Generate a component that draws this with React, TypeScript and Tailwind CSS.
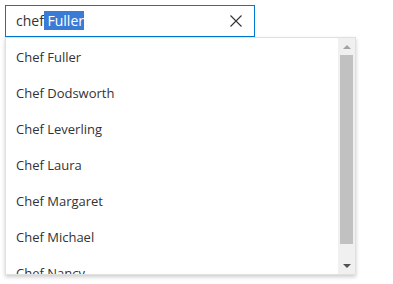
import React from "react";

const items = [
  "Chef Fuller",
  "Chef Dodsworth",
  "Chef Leverling",
  "Chef Laura",
  "Chef Margaret",
  "Chef Michael",
  "Chef Nancy",
];

export default function App() {
  return (
    <div
      className="w-[393px] h-[284px] bg-white relative overflow-hidden"
      style={{ fontFamily: '"Open Sans", "Noto Sans", sans-serif' }}
    >
      <div className="pt-[5px] pl-[5px]">
        <div className="w-[250px] h-[32px] border border-[#0078d4] flex items-center pl-[10px] pr-[9px]">
          <div className="flex-1 text-[14px] text-[#333] leading-[20px] whitespace-pre">
            chef<span className="bg-[#3a7bd5] text-white"> Fuller</span>
          </div>
          <svg width="14" height="14" viewBox="0 0 14 14" className="mr-[2px]">
            <path d="M1.5 1.5 L12.5 12.5 M12.5 1.5 L1.5 12.5" stroke="#333" strokeWidth="1.1" fill="none" />
          </svg>
        </div>
      </div>
      <div className="absolute left-[5px] top-[37px] w-[351px] h-[238px] bg-white border border-[#e0e0e0] shadow-[0_2px_4px_rgba(0,0,0,0.2)] flex overflow-hidden">
        <div className="flex-1 pt-[2px] overflow-hidden">
          {items.map((t) => (
            <div key={t} className="h-[36px] flex items-center pl-[10px] text-[13px] text-[#333]">
              {t}
            </div>
          ))}
        </div>
        <div className="w-[17px] h-full bg-[#f0f0f0] flex flex-col items-center">
          <div className="h-[17px] w-full flex items-center justify-center">
            <svg width="8" height="4" viewBox="0 0 8 4">
              <path d="M0 4 L4 0 L8 4 Z" fill="#a3a3a3" />
            </svg>
          </div>
          <div className="w-[13px] h-[189px] bg-[#c1c1c1]" />
          <div className="flex-1" />
          <div className="h-[17px] w-full flex items-center justify-center">
            <svg width="8" height="4" viewBox="0 0 8 4">
              <path d="M0 0 L8 0 L4 4 Z" fill="#505050" />
            </svg>
          </div>
        </div>
      </div>
    </div>
  );
}
